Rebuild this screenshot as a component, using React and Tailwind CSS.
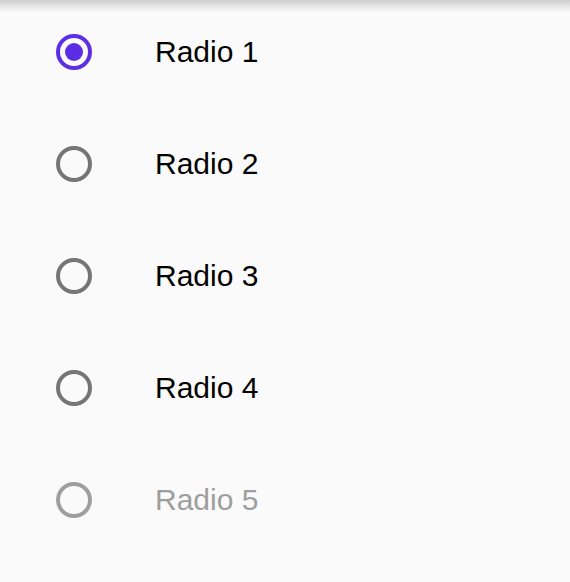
import { useState } from 'react';

const options = [
  { id: 1, label: 'Radio 1' },
  { id: 2, label: 'Radio 2' },
  { id: 3, label: 'Radio 3' },
  { id: 4, label: 'Radio 4' },
  { id: 5, label: 'Radio 5', disabled: true },
];

function RadioMark({ checked, disabled }) {
  const ring = checked
    ? 'border-[#5b2ee6]'
    : disabled
      ? 'border-[#9e9e9e]'
      : 'border-[#757575]';
  return (
    <span
      className={`flex h-[36px] w-[36px] shrink-0 items-center justify-center rounded-full border-[4px] ${ring}`}
    >
      {checked && <span className="h-[18px] w-[18px] rounded-full bg-[#5b2ee6]" />}
    </span>
  );
}

export default function App() {
  const [selected, setSelected] = useState(1);

  return (
    <div
      className="relative min-h-[582px] w-full bg-[#fafafa]"
      style={{ fontFamily: '"Liberation Sans", Arial, sans-serif' }}
    >
      {/* shadow from the bar above */}
      <div className="pointer-events-none absolute inset-x-0 top-0 h-[12px] bg-gradient-to-b from-[#cdcdcd] to-[#fafafa]/0" />

      <div className="flex flex-col gap-2">
        {options.map((opt) => (
          <button
            key={opt.id}
            type="button"
            disabled={opt.disabled}
            onClick={() => setSelected(opt.id)}
            className="flex h-[104px] items-center gap-[63px] pl-[56px] text-left"
          >
            <RadioMark checked={selected === opt.id} disabled={opt.disabled} />
            <span
              className={`text-[30px] leading-none ${
                opt.disabled ? 'text-[#9e9e9e]' : 'text-black'
              }`}
            >
              {opt.label}
            </span>
          </button>
        ))}
      </div>
    </div>
  );
}
